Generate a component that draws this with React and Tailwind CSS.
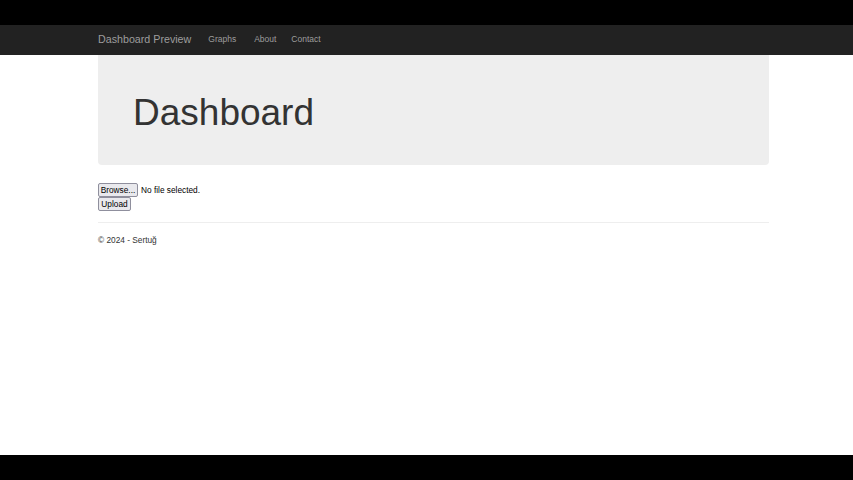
export default function App() {
  return (
    <div className="w-[853px] h-[480px] flex flex-col bg-white font-['Liberation_Sans',Arial,sans-serif] text-[#333]">
      <div className="h-[25px] bg-black shrink-0" />
      <nav className="h-[30px] bg-[#222] shrink-0">
        <div className="w-[671px] ml-[98px] flex items-center h-full pb-[2px]">
          <span className="text-[10.7px] text-[#9d9d9d] mr-[17px]">Dashboard Preview</span>
          <span className="text-[8.5px] text-[#9d9d9d] mr-[18px]">Graphs</span>
          <span className="text-[8.5px] text-[#9d9d9d] mr-[15px]">About</span>
          <span className="text-[8.5px] text-[#9d9d9d]">Contact</span>
        </div>
      </nav>
      <main className="flex-1">
        <div className="w-[671px] ml-[98px]">
          <div className="h-[110px] bg-[#eee] rounded-b-[4px] flex items-center pl-[35px]">
            <h1 className="text-[37px] leading-none text-[#333] pt-[4px]">Dashboard</h1>
          </div>
          <div className="mt-[18px] flex items-center gap-[3px] text-[8.3px] text-black">
            <span className="h-[14px] w-[40px] flex items-center justify-center bg-[#e9e9ed] border border-[#8f8f9d] rounded-[2px]">Browse...</span>
            <span>No file selected.</span>
          </div>
          <div className="mt-[0px] text-[8.3px] text-black">
            <span className="inline-flex h-[14px] w-[33px] justify-center items-center bg-[#e9e9ed] border border-[#8f8f9d] rounded-[2px]">Upload</span>
          </div>
          <div className="mt-[11px] border-t border-[#eee]" />
          <div className="mt-[11px] text-[8.3px] text-[#333]">© 2024 - Sertuğ</div>
        </div>
      </main>
      <div className="h-[25px] bg-black shrink-0" />
    </div>
  );
}
